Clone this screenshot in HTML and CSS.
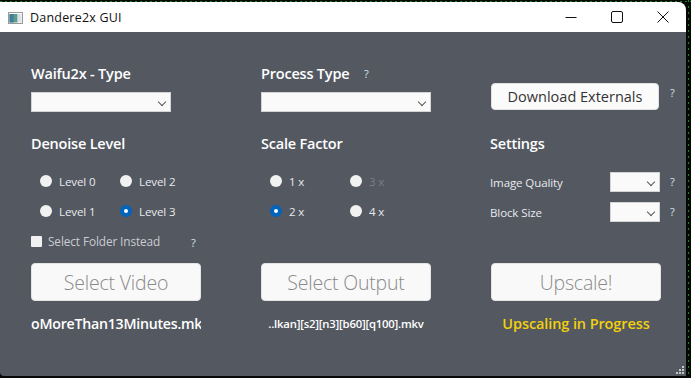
FILE: index.html
```html
<!DOCTYPE html>
<html>
<head>
<meta charset="utf-8">
<title>Dandere2x GUI</title>
<link rel="stylesheet" href="styles.css">
</head>
<body>
<div class="window">
  <div class="titlebar">
    <svg class="app-icon" width="15" height="12" viewBox="0 0 15 12">
      <rect x="0.5" y="0.5" width="14" height="11" fill="#fff" stroke="#9a9a9a"/>
      <rect x="1.5" y="2" width="8" height="8.5" fill="#5f9a8a"/>
      <rect x="1.5" y="2" width="4" height="8.5" fill="#3f7f9a"/>
      <rect x="10" y="2" width="3.5" height="8.5" fill="#d9e2e8"/>
    </svg>
    <span class="title">Dandere2x GUI</span>
    <div class="controls">
      <span class="ctl"><svg width="12" height="12" viewBox="0 0 12 12"><path d="M0.5 6.5h11" stroke="#111" stroke-width="1"/></svg></span>
      <span class="ctl"><svg width="12" height="12" viewBox="0 0 12 12"><rect x="0.5" y="0.5" width="11" height="11" rx="1.5" fill="none" stroke="#111" stroke-width="1"/></svg></span>
      <span class="ctl"><svg width="12" height="12" viewBox="0 0 12 12"><path d="M0.5 0.5l11 11M11.5 0.5l-11 11" stroke="#111" stroke-width="1"/></svg></span>
    </div>
  </div>
  <div class="content">
    <div class="heading col1 row1">Waifu2x - Type</div>
    <div class="combo col1 row2"><span class="chev"></span></div>

    <div class="heading col2 row1">Process Type <span class="q q-head">?</span></div>
    <div class="combo col2 row2"><span class="chev"></span></div>

    <div class="dl-wrap col3 row12">
      <button class="dl-btn">Download Externals</button>
      <span class="q">?</span>
    </div>

    <div class="heading col1 row3">Denoise Level</div>
    <div class="heading col2 row3">Scale Factor</div>
    <div class="heading col3 row3">Settings</div>

    <div class="radios col1 row4">
      <label class="radio"><span class="dot"></span>Level 0</label>
      <label class="radio"><span class="dot"></span>Level 2</label>
    </div>
    <div class="radios col1 row5">
      <label class="radio"><span class="dot"></span>Level 1</label>
      <label class="radio"><span class="dot on"></span>Level 3</label>
    </div>

    <div class="radios col2 row4">
      <label class="radio"><span class="dot"></span>1 x</label>
      <label class="radio disabled"><span class="dot"></span>3 x</label>
    </div>
    <div class="radios col2 row5">
      <label class="radio"><span class="dot on"></span>2 x</label>
      <label class="radio"><span class="dot"></span>4 x</label>
    </div>

    <div class="setting col3 row4">
      <span class="setting-label">Image Quality</span>
      <div class="combo small"><span class="chev"></span></div>
      <span class="q">?</span>
    </div>
    <div class="setting col3 row5">
      <span class="setting-label">Block Size</span>
      <div class="combo small"><span class="chev"></span></div>
      <span class="q">?</span>
    </div>

    <div class="check col1 row6">
      <span class="box"></span>
      <span class="check-label">Select Folder Instead</span>
      <span class="q">?</span>
    </div>

    <button class="big-btn col1 row7">Select Video</button>
    <button class="big-btn col2 row7">Select Output</button>
    <button class="big-btn col3 row7">Upscale!</button>

    <div class="file col1 row8 clip">oMoreThan13Minutes.mkv</div>
    <div class="file col2 row8 small-file">..lkan][s2][n3][b60][q100].mkv</div>
    <div class="file col3 row8 status">Upscaling in Progress</div>
  </div>
  <svg class="grip" width="9" height="9" viewBox="0 0 9 9">
    <rect x="6" y="0" width="2" height="2" fill="#c8c8c8"/>
    <rect x="3" y="3" width="2" height="2" fill="#c8c8c8"/>
    <rect x="6" y="3" width="2" height="2" fill="#c8c8c8"/>
    <rect x="0" y="6" width="2" height="2" fill="#c8c8c8"/>
    <rect x="3" y="6" width="2" height="2" fill="#c8c8c8"/>
    <rect x="6" y="6" width="2" height="2" fill="#c8c8c8"/>
  </svg>
</div>
</body>
</html>
```

FILE: styles.css
```css
html, body {
  margin: 0;
  padding: 0;
}
body {
  width: 691px;
  height: 378px;
  overflow: hidden;
  background-color: #070907;
  background-image:
    repeating-linear-gradient(90deg, #1e8a1e 0 2px, transparent 2px 5px),
    repeating-linear-gradient(180deg, #1e8a1e 0 2px, transparent 2px 6px);
  background-size: 691px 1px, 1px 378px;
  background-position: 0 1px, 688px 0;
  background-repeat: no-repeat;
  font-family: "Open Sans", "Noto Sans", sans-serif;
  padding-top: 2px;
  box-sizing: border-box;
}
.window {
  position: relative;
  width: 686px;
  height: 374px;
  background: #545861;
  border-radius: 0 8px 0 4px;
  overflow: hidden;
}
.titlebar {
  height: 30px;
  background: #ffffff;
  display: flex;
  align-items: center;
  padding-left: 8px;
}
.app-icon {
  display: block;
  margin-right: 7px;
  margin-top: 1px;
}
.title {
  font-size: 12.5px;
  color: #111;
  letter-spacing: 0.2px;
}
.controls {
  margin-left: auto;
  display: flex;
  height: 30px;
}
.ctl {
  width: 46px;
  height: 30px;
  display: flex;
  align-items: center;
  justify-content: center;
}
.ctl svg { display: block; }

.content {
  display: grid;
  grid-template-columns: 170px 170px 170px;
  grid-template-rows: 24px 26px 44px 35px 30px 30px 50px 33px;
  column-gap: 60px;
  padding: 30px 0 0 31px;
}
.col1 { grid-column: 1; }
.col2 { grid-column: 2; }
.col3 { grid-column: 3; }
.row1 { grid-row: 1; }
.row2 { grid-row: 2; }
.row12 { grid-row: 1 / 3; }
.row3 { grid-row: 3; }
.row4 { grid-row: 4; }
.row5 { grid-row: 5; }
.row6 { grid-row: 6; }
.row7 { grid-row: 7; }
.row8 { grid-row: 8; }

.content > * { align-self: end; }

.heading {
  height: 24px;
  line-height: 24px;
  font-size: 14.5px;
  font-weight: 600;
  color: #ffffff;
  letter-spacing: -0.2px;
  white-space: nowrap;
}
.col3.heading { margin-left: -1px; }

.q {
  font-size: 11px;
  color: #d6e0ea;
  font-weight: 400;
}
.q-head {
  margin-left: 11px;
  position: relative;
  top: -1px;
}

.combo {
  position: relative;
  height: 20px;
  background: #fafafa;
  border: 1px solid #d4d4d4;
  box-sizing: border-box;
  width: 140px;
}
.col2.combo { width: 170px; }
.combo.small { width: 50px; }
.chev {
  position: absolute;
  right: 5px;
  top: 6px;
  width: 5px;
  height: 5px;
  border-right: 1px solid #555;
  border-bottom: 1px solid #555;
  transform: rotate(45deg);
}

.dl-wrap {
  display: flex;
  align-items: center;
  margin-bottom: 2px;
  width: 200px;
}
.dl-btn {
  flex: none;
  width: 168px;
  height: 27px;
  background: #fbfbfb;
  border: 1px solid #e2e2e2;
  border-radius: 4px;
  font-family: "Open Sans", "Noto Sans", sans-serif;
  font-size: 14.5px;
  color: #333;
  padding: 0;
  letter-spacing: 0;
}
.dl-wrap .q {
  margin-left: 11px;
  margin-top: -8px;
}

.radios {
  display: flex;
  height: 20px;
  align-items: center;
  padding-left: 9px;
}
.radio {
  width: 80px;
  display: flex;
  align-items: center;
  font-size: 11.5px;
  color: #e8eaee;
  letter-spacing: -0.1px;
}
.radio.disabled { color: #7b7f87; }
.dot {
  width: 12px;
  height: 12px;
  border-radius: 50%;
  background: #f1f1f1;
  margin-right: 7px;
  box-sizing: border-box;
  flex: none;
}
.dot.on {
  background: #ffffff;
  border: 4px solid #0064bd;
}

.setting {
  display: flex;
  align-items: center;
  height: 20px;
  width: 200px;
  margin-bottom: -1px;
}
.setting-label {
  width: 119px;
  font-size: 11.5px;
  color: #e8eaee;
  margin-left: -1px;
  letter-spacing: -0.1px;
}
.setting .combo { margin-left: 1px; }
.setting .q { margin-left: 10px; margin-top: -2px; }

.check {
  display: flex;
  align-items: center;
  height: 20px;
  white-space: nowrap;
}
.box {
  width: 11px;
  height: 11px;
  background: #f1f1f1;
  border-radius: 1px;
  margin-right: 6px;
  flex: none;
}
.check-label {
  font-size: 11.8px;
  color: #c9ccd1;
  width: 143px;
  letter-spacing: -0.1px;
}
.check .q { margin-top: 2px; }

.big-btn {
  height: 38px;
  width: 170px;
  background: #f9f9f9;
  border: 1px solid #e4e4e4;
  border-radius: 4px;
  font-family: "Open Sans", "Noto Sans", sans-serif;
  font-size: 19.5px;
  font-weight: 300;
  color: #8a8a8a;
  padding: 0;
  letter-spacing: -0.2px;
}

.file {
  height: 20px;
  line-height: 20px;
  color: #ffffff;
  font-weight: 600;
  white-space: nowrap;
}
.clip {
  overflow: hidden;
  font-size: 14.2px;
  letter-spacing: -0.25px;
}
.small-file {
  font-size: 11.3px;
  text-align: center;
  letter-spacing: -0.2px;
}
.status {
  font-size: 14.5px;
  color: #f2d00c;
  text-align: center;
  letter-spacing: -0.1px;
}

.grip {
  position: absolute;
  right: 1px;
  bottom: 1px;
}
```
